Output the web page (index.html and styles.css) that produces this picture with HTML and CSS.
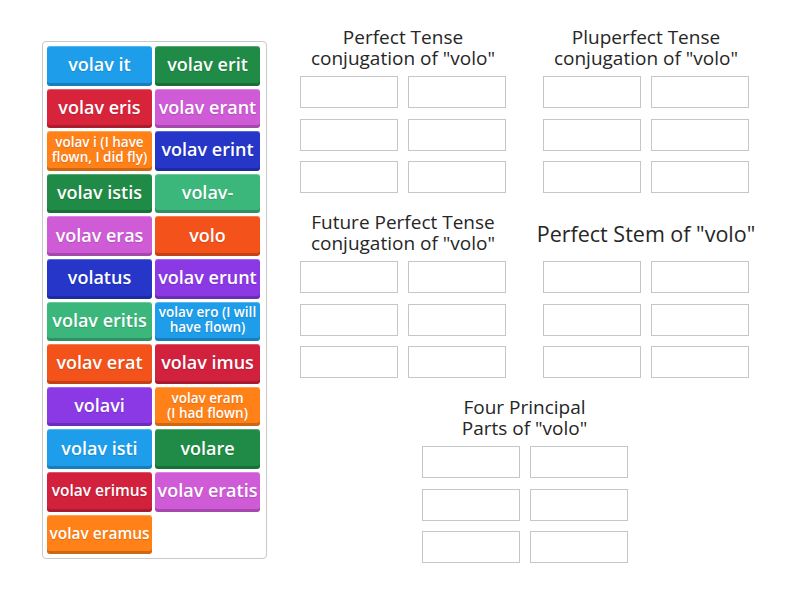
FILE: index.html
```html
<!DOCTYPE html>
<html>
<head>
<meta charset="utf-8">
<link rel="stylesheet" href="styles.css">
</head>
<body>
<div class="page">
  <div class="bank">
    <div class="tile blue">volav it</div>
    <div class="tile dgreen">volav erit</div>
    <div class="tile red">volav eris</div>
    <div class="tile magenta">volav erant</div>
    <div class="tile orange small">volav i (I have<br>flown, I did fly)</div>
    <div class="tile dblue">volav erint</div>
    <div class="tile dgreen">volav istis</div>
    <div class="tile sea">volav-</div>
    <div class="tile magenta">volav eras</div>
    <div class="tile ored">volo</div>
    <div class="tile dblue">volatus</div>
    <div class="tile purple">volav erunt</div>
    <div class="tile sea">volav eritis</div>
    <div class="tile blue small">volav ero (I will<br>have flown)</div>
    <div class="tile ored">volav erat</div>
    <div class="tile crimson">volav imus</div>
    <div class="tile purple">volavi</div>
    <div class="tile orange small">volav eram<br>(I had flown)</div>
    <div class="tile blue">volav isti</div>
    <div class="tile dgreen">volare</div>
    <div class="tile crimson fit">volav erimus</div>
    <div class="tile magenta">volav eratis</div>
    <div class="tile orange fit">volav eramus</div>
  </div>
  <div class="groups">
    <div class="group">
      <div class="title">Perfect Tense<br>conjugation of "volo"</div>
      <div class="slots"><div class="slot"></div><div class="slot"></div><div class="slot"></div><div class="slot"></div><div class="slot"></div><div class="slot"></div></div>
    </div>
    <div class="group">
      <div class="title">Pluperfect Tense<br>conjugation of "volo"</div>
      <div class="slots"><div class="slot"></div><div class="slot"></div><div class="slot"></div><div class="slot"></div><div class="slot"></div><div class="slot"></div></div>
    </div>
    <div class="group">
      <div class="title">Future Perfect Tense<br>conjugation of "volo"</div>
      <div class="slots"><div class="slot"></div><div class="slot"></div><div class="slot"></div><div class="slot"></div><div class="slot"></div><div class="slot"></div></div>
    </div>
    <div class="group">
      <div class="title big">Perfect Stem of "volo"</div>
      <div class="slots"><div class="slot"></div><div class="slot"></div><div class="slot"></div><div class="slot"></div><div class="slot"></div><div class="slot"></div></div>
    </div>
    <div class="group">
      <div class="title">Four Principal<br>Parts of "volo"</div>
      <div class="slots"><div class="slot"></div><div class="slot"></div><div class="slot"></div><div class="slot"></div><div class="slot"></div><div class="slot"></div></div>
    </div>
  </div>
</div>
</body>
</html>
```
FILE: styles.css
```css
html, body {
  margin: 0;
  padding: 0;
  background: #fff;
  font-family: "Open Sans", "Liberation Sans", sans-serif;
}
.page {
  display: flex;
  align-items: flex-start;
  padding: 27px 0 0 42px;
}
.bank {
  margin-top: 14px;
  width: 215px;
  border: 1px solid #c9c9c9;
  border-radius: 4px;
  padding: 4px;
  display: grid;
  grid-template-columns: 105px 105px;
  grid-auto-rows: 39.6px;
  gap: 3px;
}
.tile {
  box-sizing: border-box;
  border-radius: 3px;
  color: #fff;
  font-weight: 600;
  font-size: 18px;
  line-height: 19px;
  display: flex;
  align-items: center;
  justify-content: center;
  text-align: center;
  padding: 0 1px 2px;
  white-space: nowrap;
  box-shadow: inset 0 -3px 0 rgba(0,0,0,0.2), inset 0 1px 0 rgba(255,255,255,0.25);
  text-shadow: 0 1px 1px rgba(0,0,0,0.15);
}
.tile.small {
  font-size: 13.5px;
  line-height: 15px;
}
.tile.fit { font-size: 15.5px; }
.blue { background: #1e9eea; }
.dgreen { background: #1f8b46; }
.red { background: #d8243b; }
.magenta { background: #cf5bd7; }
.orange { background: #ff8118; }
.dblue { background: #2536c8; }
.sea { background: #3cb77b; }
.ored { background: #f4521b; }
.purple { background: #8a39e5; }
.crimson { background: #d1213d; }

.groups {
  margin-left: 14px;
  width: 486px;
  display: flex;
  flex-wrap: wrap;
  justify-content: center;
}
.group {
  width: 243px;
  height: 185px;
  box-sizing: border-box;
  padding: 0 18px 0 19px;
}
.title {
  height: 42px;
  display: flex;
  align-items: center;
  justify-content: center;
  text-align: center;
  font-size: 19px;
  line-height: 21px;
  color: #262626;
  margin-bottom: 7px;
  white-space: nowrap;
}
.title.big { font-size: 21.5px; }
.slots {
  display: grid;
  grid-template-columns: 98px 98px;
  grid-auto-rows: 32px;
  column-gap: 10px;
  row-gap: 10.5px;
}
.slot {
  border: 1px solid #c6c6c6;
  background: #fff;
}
```
